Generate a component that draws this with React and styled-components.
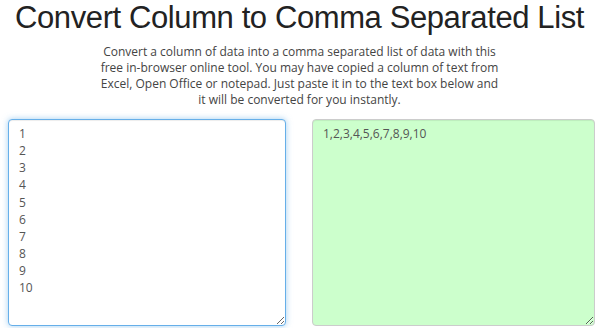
import React from "react";
import styled, {createGlobalStyle} from "styled-components";

const GlobalStyle = createGlobalStyle`
  html, body {
    margin: 0;
    padding: 0;
    background: #fff;
  }
  * {
    box-sizing: border-box;
  }
`;

const Page = styled.div`
  width: 599px;
  height: 328px;
  display: flex;
  flex-direction: column;
  align-items: center;
  overflow: hidden;
`;

const Title = styled.h1`
  margin: 0 0 8px;
  font-family: "Liberation Sans", Arial, sans-serif;
  font-weight: 400;
  font-size: 31px;
  line-height: 36px;
  letter-spacing: -0.4px;
  color: #222;
  text-align: center;
  white-space: nowrap;
`;

const Intro = styled.p`
  margin: 0;
  width: 400px;
  font-family: "Open Sans", sans-serif;
  font-size: 12px;
  line-height: 16px;
  color: #444;
  text-align: center;
`;

const Columns = styled.div`
  align-self: stretch;
  display: grid;
  grid-template-columns: 278px 283px;
  column-gap: 26px;
  padding: 11px 0 0 8px;
`;

const Box = styled.textarea`
  display: block;
  width: 100%;
  height: 207px;
  margin: 0;
  padding: 5px 10px;
  font-family: "Open Sans", sans-serif;
  font-size: 12px;
  line-height: 1.42857;
  color: #555;
  border-radius: 4px;
  outline: none;
  resize: both;
  border: 1px solid ${p => (p.$focused ? "#66afe9" : "#ccc")};
  background: ${p => (p.$result ? "#ccffcc" : "#fff")};
  box-shadow: ${p => (p.$focused
    ? "inset 0 1px 1px rgba(0,0,0,.075), 0 0 6px rgba(102,175,233,.6)"
    : "inset 0 1px 1px rgba(0,0,0,.075)")};
`;

const column = ["1", "2", "3", "4", "5", "6", "7", "8", "9", "10"];

const App = () => {
  return (
    <Page>
      <GlobalStyle/>
      <Title>Convert Column to Comma Separated List</Title>
      <Intro>
        Convert a column of data into a comma separated list of data with this
        free in-browser online tool. You may have copied a column of text from
        Excel, Open Office or notepad. Just paste it in to the text box below and
        it will be converted for you instantly.
      </Intro>
      <Columns>
        <Box $focused readOnly value={column.join("\n")}/>
        <Box $result readOnly value={column.join(",")}/>
      </Columns>
    </Page>
  );
};

export default App;
